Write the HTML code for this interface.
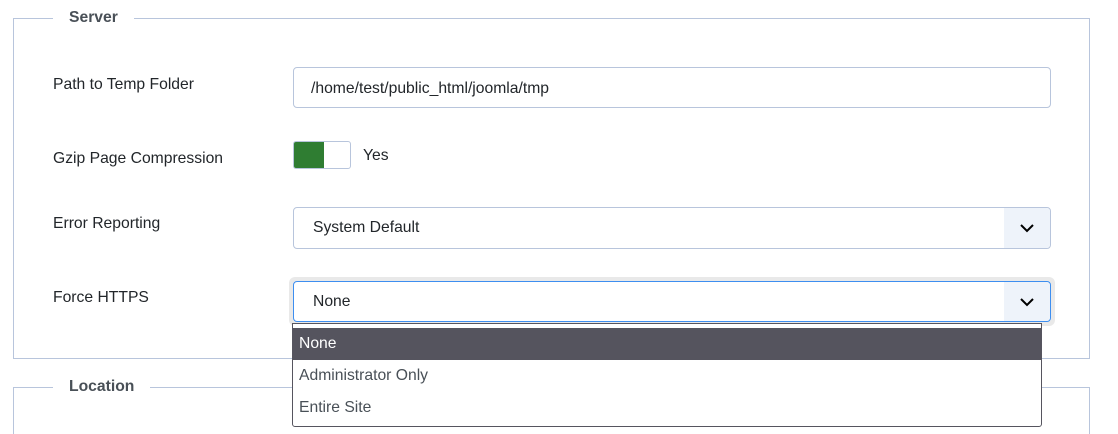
<!DOCTYPE html>
<html style="overflow:hidden;height:434px"><head><style>
body{margin:0;width:1118px;height:434px;background:#fff;position:relative;overflow:hidden;font-family:"Liberation Sans",sans-serif;color:#22262a;font-size:15.7px}
.a{position:absolute}
.fs{position:absolute;border:1px solid #b8c5dc;left:13px;width:1075px}
.lg{position:absolute;background:#fff;font-weight:bold;color:#495057;font-size:15.7px;padding:0 16px}
.lbl{position:absolute;left:53px}
.inp{position:absolute;left:293px;width:758px;height:40px;border:1px solid #b8c5dc;border-radius:4px;box-sizing:border-box;background:#fff}
.btn{position:absolute;right:0;top:0;width:46px;height:100%;background:#eef3fa;border-radius:0 4px 4px 0}
.opt{position:absolute;left:0;width:748px;height:32px;line-height:32px;padding-left:6px;box-sizing:border-box;color:#495057}
</style></head><body>
<div class="fs" style="top:18px;height:339px"></div>
<div class="lg" style="left:53px;top:9px">Server</div>
<div class="fs" style="top:387px;height:60px"></div>
<div class="lg" style="left:53px;top:378px">Location</div>

<div class="lbl" style="top:76px">Path to Temp Folder</div>
<div class="inp" style="top:67px;height:41px"><span class="a" style="left:17px;top:12px">/home/test/public_html/joomla/tmp</span></div>

<div class="lbl" style="top:150px">Gzip Page Compression</div>
<div class="a" style="left:293px;top:141px;width:58px;height:28px;border:1px solid #b8c5dc;border-radius:3px;box-sizing:border-box;overflow:hidden"><div style="width:30px;height:100%;background:#2f7d32"></div></div>
<div class="a" style="left:363px;top:147px">Yes</div>

<div class="lbl" style="top:215px">Error Reporting</div>
<div class="inp" style="top:207px;height:42px"><span class="a" style="left:19px;top:11px">System Default</span><div class="btn"><svg class="a" style="left:15px;top:15px" width="16" height="10"><path d="M2 2l6 6 6-6" stroke="#000" stroke-width="2" fill="none"/></svg></div></div>

<div class="lbl" style="top:289px">Force HTTPS</div>
<div class="a" style="left:289px;top:277px;width:766px;height:49px;border-radius:6px;background:#e9e9e9"></div>
<div class="inp" style="top:281px;height:41px;border-color:#3d8ef0"><span class="a" style="left:19px;top:11px">None</span><div class="btn" style="height:39px"><svg class="a" style="left:15px;top:15px" width="16" height="10"><path d="M2 2l6 6 6-6" stroke="#000" stroke-width="2" fill="none"/></svg></div></div>

<div class="a" style="left:292px;top:323px;width:750px;height:104px;border:1px solid #56555f;border-radius:0 0 3px 3px;box-sizing:border-box;background:#fff">
<div class="opt" style="top:4px;background:#55545e;color:#fff">None</div>
<div class="opt" style="top:36px">Administrator Only</div>
<div class="opt" style="top:68px">Entire Site</div>
</div>
</body></html>
